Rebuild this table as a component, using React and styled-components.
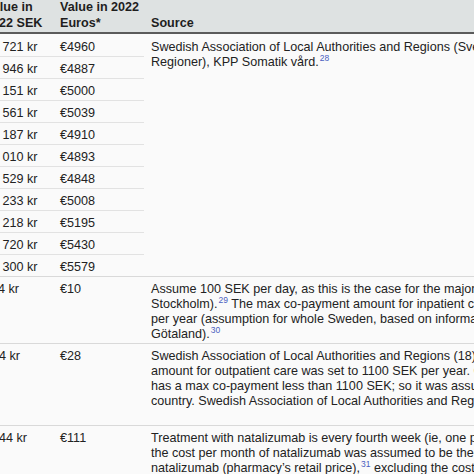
import styled, { createGlobalStyle } from "styled-components";

const GlobalStyle = createGlobalStyle`
  html, body {
    margin: 0;
    padding: 0;
    background: #fafafa;
  }
  body {
    font-family: "Liberation Sans", Arial, sans-serif;
    color: #222;
  }
`;

const groupRows = [
  ["54 721 kr", "€4960"],
  ["53 946 kr", "€4887"],
  ["55 151 kr", "€5000"],
  ["55 561 kr", "€5039"],
  ["54 187 kr", "€4910"],
  ["54 010 kr", "€4893"],
  ["53 529 kr", "€4848"],
  ["55 233 kr", "€5008"],
  ["57 218 kr", "€5195"],
  ["59 720 kr", "€5430"],
  ["61 300 kr", "€5579"],
];

const singleRows = [
  {
    sek: "114 kr",
    eur: "€10",
    minLines: 4,
    lines: [
      ["Assume 100 SEK per day, as this is the case for the majority of regions (including"],
      ["Stockholm).", "29", " The max co-payment amount for inpatient care was set to 1100 SEK"],
      ["per year (assumption for whole Sweden, based on information from Västra"],
      ["Götaland).", "30"],
    ],
  },
  {
    sek: "304 kr",
    eur: "€28",
    minLines: 5,
    lines: [
      ["Swedish Association of Local Authorities and Regions (18). The max co-payment"],
      ["amount for outpatient care was set to 1100 SEK per year. Only one region"],
      ["has a max co-payment less than 1100 SEK; so it was assumed for the whole"],
      ["country. Swedish Association of Local Authorities and Regions (Sveriges"],
    ],
  },
  {
    sek: "1244 kr",
    eur: "€111",
    minLines: 4,
    lines: [
      ["Treatment with natalizumab is every fourth week (ie, one per month), therefore"],
      ["the cost per month of natalizumab was assumed to be the cost of one dose of"],
      ["natalizumab (pharmacy’s retail price),", "31", " excluding the cost of the infusion."],
      ["Sweden. Dental and Pharmaceutical Benefits Agency."],
    ],
  },
];

const App = () => {
  return (
    <>
      <GlobalStyle />
      <Frame>
        <Table>
          <colgroup>
            <col style={{ width: 75 }} />
            <col style={{ width: 91 }} />
            <col style={{ width: 700 }} />
          </colgroup>
          <thead>
            <tr>
              <HeadCell>Value in<br />2022 SEK</HeadCell>
              <HeadCell>Value in 2022<br />Euros*</HeadCell>
              <HeadCell>Source</HeadCell>
            </tr>
          </thead>
          <tbody>
            {groupRows.map(([sek, eur], i) => (
              <tr key={sek}>
                <ValueCell $first={i === 0} $last={i === groupRows.length - 1}>{sek}</ValueCell>
                <ValueCell $first={i === 0} $last={i === groupRows.length - 1}>{eur}</ValueCell>
                {i === 0 && (
                  <SourceCell $first rowSpan={groupRows.length}>
                    <Line>Swedish Association of Local Authorities and Regions (Sveriges Kommuner och</Line>
                    <Line>Regioner), KPP Somatik vård.<Ref>28</Ref></Line>
                  </SourceCell>
                )}
              </tr>
            ))}
            {singleRows.map((row) => (
              <tr key={row.eur}>
                <ValueCell $last>{row.sek}</ValueCell>
                <ValueCell $last>{row.eur}</ValueCell>
                <SourceCell>
                  <SourceText $minLines={row.minLines}>
                    {row.lines.map((parts, j) => (
                      <Line key={j}>
                        {parts[0]}
                        {parts[1] && <Ref>{parts[1]}</Ref>}
                        {parts[2]}
                      </Line>
                    ))}
                  </SourceText>
                </SourceCell>
              </tr>
            ))}
          </tbody>
        </Table>
      </Frame>
    </>
  );
};

/* Styled Components */
const Frame = styled.div`
  width: 474px;
  height: 474px;
  overflow: hidden;
  background: #fafafa;
`;

const Table = styled.table`
  margin: -1px 0 0 -22px;
  width: 866px;
  border-collapse: collapse;
  table-layout: fixed;
  font-size: 12.6px;
  line-height: 15px;
`;

const HeadCell = styled.th`
  background: #dee2e2;
  font-weight: bold;
  text-align: left;
  vertical-align: bottom;
  line-height: 16px;
  padding: 0 7px 1px;
  border-bottom: 2px solid #5b5b5b;
  white-space: nowrap;
  color: #1e1e1e;
`;

const ValueCell = styled.td`
  vertical-align: top;
  padding: ${(p) => (p.$first ? "6px" : "5px")} 7px 1px;
  white-space: nowrap;
  border-bottom: 1px solid ${(p) => (p.$last ? "#d9d9d9" : "#e2e2e2")};
`;

const SourceCell = styled.td`
  vertical-align: top;
  padding: ${(p) => (p.$first ? "6px" : "5px")} 7px 1px;
  border-bottom: 1px solid #d9d9d9;
`;

const SourceText = styled.div`
  min-height: ${(p) => p.$minLines * 15}px;
`;

const Line = styled.div`
  white-space: nowrap;
`;

const Ref = styled.sup`
  color: #4a5fc1;
  font-size: 8.5px;
  line-height: 0;
  vertical-align: 0;
  position: relative;
  top: -5px;
  margin-left: 1px;
`;

export default App;
